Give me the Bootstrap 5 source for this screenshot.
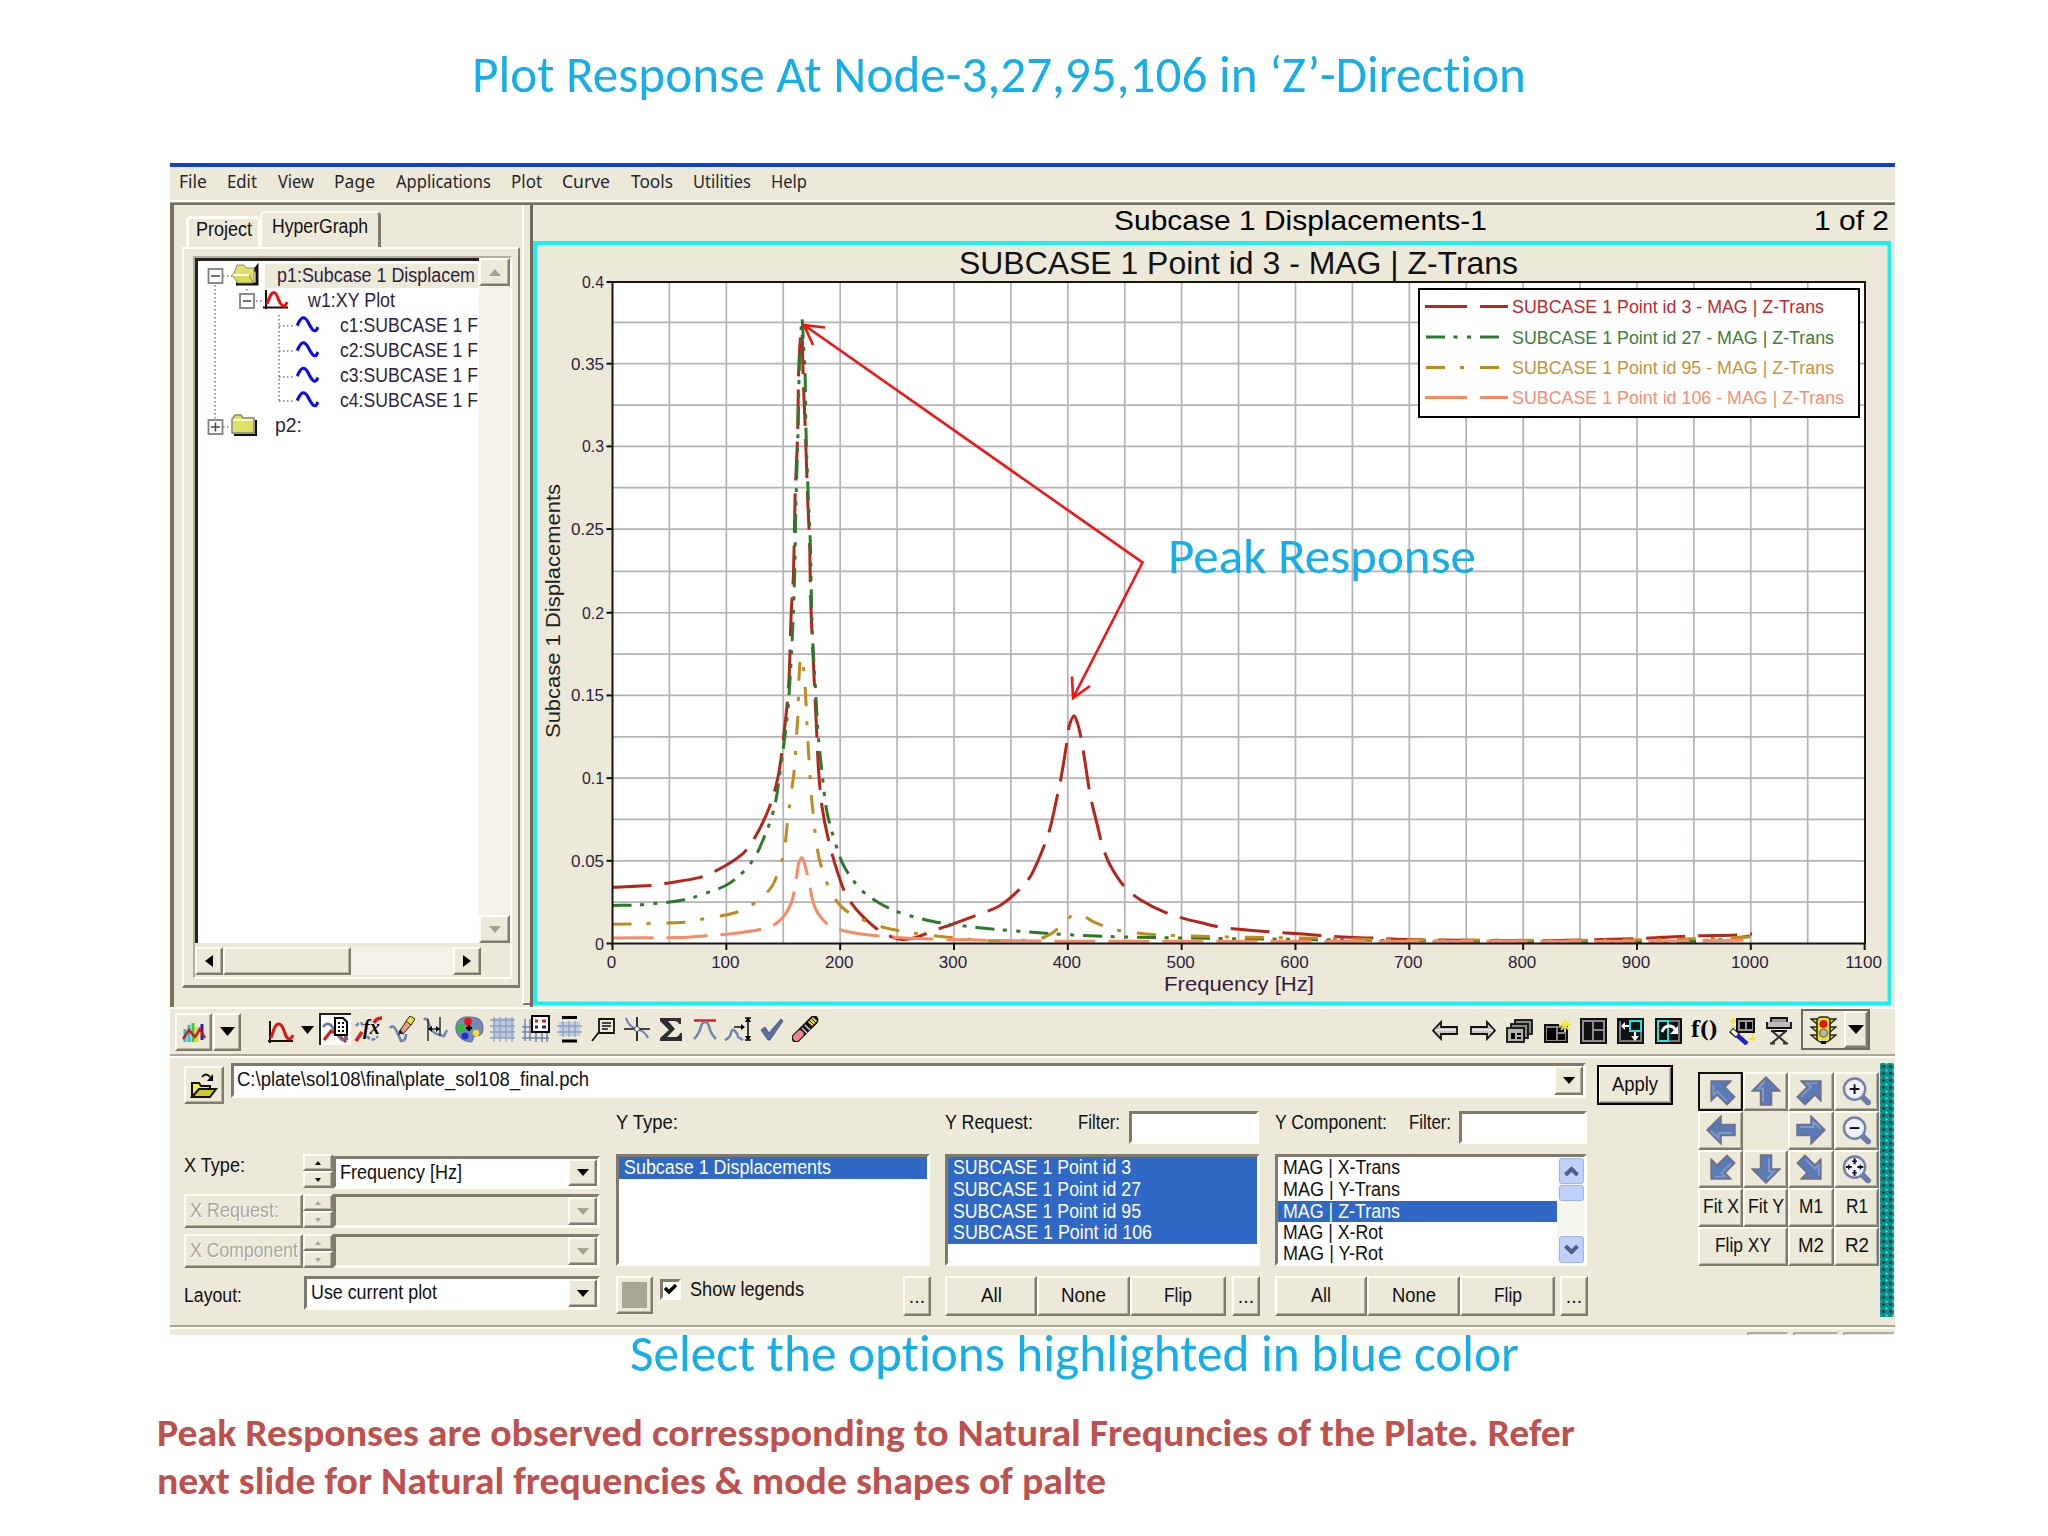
<!DOCTYPE html>
<html lang="en">
<head>
<meta charset="utf-8">
<title>Plot Response</title>
<meta name="viewport" content="width=device-width, initial-scale=1">
<link href="https://cdn.jsdelivr.net/npm/bootstrap@5.3.0/dist/css/bootstrap.min.css" rel="stylesheet">
<style>
:root{--face:#ece9d8;--hi:#fffff6;--lo:#7e7b6d;--lo2:#b3af9f;--sel:#2f68c5;--cy:#14aee9}
body{background:#fff;font-family:"Liberation Sans",Arial,sans-serif;color:#111}
.slide{width:2048px;height:1536px;overflow:hidden;position:relative}
.cal{font-family:Carlito,Lato,sans-serif;color:var(--cy);line-height:1;white-space:nowrap;font-variant-ligatures:none}
.fit{display:inline-block;white-space:nowrap;text-align:left}
.fit>span{display:inline-block;transform-origin:0 50%}
.headline{height:163px;padding:51px 0 0 472px;font-size:50.5px}
.app{margin-left:170px;width:1725px;height:1172px;background:var(--face);font-size:19.5px;line-height:22px}
.topline{height:4px;background:#0f43c4}
.menus{height:33px;padding:0 0 4px 9px;font-family:"Noto Sans","DejaVu Sans",sans-serif;font-size:18px;color:#27262c}
.rule{height:5px;border-top:2px solid #fffff6;background:linear-gradient(#9f9b8b 0 1px,#75735f 1px)}
.work{height:802px}
.side{width:363px;border-left:4px solid #76735f;border-right:3px solid #6d6a5d;position:relative;padding:6px 0 0 8px}
.side::after{content:"";position:absolute;right:0;top:0;bottom:2px;width:8px;border-left:2px solid #fffff6;border-bottom:2px solid var(--lo)}
.tabx{border:3px solid #fffff6;border-bottom:0;border-radius:5px 5px 0 0;background:var(--face);text-align:center}
.tab-a{width:74px;height:31px;margin-left:4px;border-right-width:2px}
.tab-b{width:121px;height:36px;border-right-color:var(--lo);border-width:2px 3px 0 2px;line-height:29px}
.pane{width:338px;height:741px;border:2px solid #fffff6;border-right-color:var(--lo);border-bottom:3px solid var(--lo);padding:7px 0 0 9px}
.tree{width:319px;height:723px;border:2px solid var(--lo2);border-right-color:#fff;border-bottom-color:#fff;position:relative}
.view{width:284px;height:685px;background:#fff;border-top:3px solid #222;border-left:3px solid #222;position:relative;overflow:hidden;color:#2c1f3d}
.view .rowx{height:25.1px;position:relative;white-space:nowrap}
.view svg.wires{position:absolute;left:0;top:0}
.vbar{width:31px;background:#f4f1e7}
.bv{background:var(--face);border:2px solid;border-color:#fffff6 var(--lo) var(--lo) #fffff6;box-shadow:inset -1px -1px 0 #b8b4a3;display:flex;align-items:center;justify-content:center;flex:none}
.sk{background:#fff;border:3px solid;border-color:#7e7b6d #fffff6 #fffff6 #7e7b6d;flex:none}
.sk.off{background:var(--face)}
.main{width:1362px;flex:none}
.cap1{height:36px;font-size:27.5px;line-height:33px;color:#000}
.tools{height:47px;border-top:2px solid #fffff6}
.slot{width:33.6px;flex:none;display:flex;justify-content:center;margin-bottom:5px}
.slot2{width:37.1px;flex:none;display:flex;justify-content:center;margin-bottom:2px}
.sep{height:4px;border-top:2px solid #aaa797;background:#fffff6}
.ctl{height:267px;position:relative}
.gray{color:#aaa798;text-shadow:1px 1px 0 #fff}
.spin{width:30px}
.spin .bv{width:30px;height:17px}
.combo{display:flex;align-items:stretch;justify-content:space-between}
.combo .bv{width:29px}
.combo>span{padding-left:4px;line-height:28px}
.lst{height:112px;overflow:hidden}
.lst div.it{height:21.8px;line-height:22px;padding-left:5px}
.lst .on{background:var(--sel);color:#fff}
.pad{display:grid;grid-template-columns:45px 45px 46px 45px;grid-auto-rows:38.8px;width:181px;height:194px}
.pad .fit{margin-top:-2px}
.teal{width:14px;height:254px;background-color:#0b8f8b;background-image:radial-gradient(circle,#053f3f 1.2px,transparent 1.6px),radial-gradient(circle,#3fd6cf 1px,transparent 1.4px);background-size:7px 7px;background-position:0 0,3px 4px}
.xp{width:25px;background:#bfd0fb;border:1px solid #9db4ea;border-radius:3px;display:flex;align-items:center;justify-content:center}
.stat{height:3px;border:2px solid var(--lo2);border-bottom:0;border-right-color:#fff}
.foot{padding:0 0 0 157px;color:#c0504d;font-weight:700;font-size:38.5px}
svg{display:block;flex:none}
svg text{font-family:"Liberation Sans",Arial,sans-serif}
</style>
<script src="https://cdn.jsdelivr.net/npm/bootstrap@5.3.0/dist/js/bootstrap.bundle.min.js"></script>
</head>
<body>
<svg width="0" height="0" style="position:absolute"><defs>
<symbol id="wave" viewBox="0 0 22 16"><path d="M1 9C3 6 4 1.500 7 1.500S11 5 13 8.500S16 14 18 14S20 12 21 10.500" fill="none" stroke="#0a0af5" stroke-width="3"/></symbol>
<symbol id="dn" viewBox="0 0 12 7"><path d="M0 0H12L6 7Z"/></symbol>
<symbol id="arr" viewBox="0 0 30 30"><path d="M15 1L29 15H20.500V29H9.500V15H1Z" fill="#5b79b4" stroke="#6f7080" stroke-width="1.500"/><path d="M14 5L7 12.500H12V26" fill="none" stroke="#7d98cc" stroke-width="2"/></symbol>
<symbol id="mag" viewBox="0 0 30 30"><path d="M20 20L27 27" stroke="#6b7ba6" stroke-width="6" stroke-linecap="round"/><circle cx="13" cy="13" r="11" fill="#eef1fa" stroke="#7380a8" stroke-width="2.500"/></symbol>
<symbol id="folder" viewBox="0 0 27 22"><path d="M4 21H26V6" fill="none" stroke="#111" stroke-width="2.500"/><path d="M2 19V5L5 1H11L13 4H24V19Z" fill="#dfe065" stroke="#8b8b74" stroke-width="1.500"/><path d="M3 6H23" stroke="#fffde0" stroke-width="1.500"/></symbol>
</defs></svg>
<main class="slide">
  <h1 class="headline cal m-0 fw-normal"><span class="fit" data-w="1054">Plot Response At Node-3,27,95,106 in ‘Z’-Direction</span></h1>

  <section class="app">
    <div class="topline"></div>
    <nav class="menus d-flex align-items-center">
      <span class="fit" data-w="28" style="margin-right:20px">File</span><span class="fit me-4" data-w="30">Edit</span>
      <span class="fit" data-w="36" style="margin:0 20px 0 -3px">View</span><span class="fit" data-w="41" style="margin-right:21px">Page</span>
      <span class="fit" data-w="95" style="margin-right:20px">Applications</span><span class="fit" data-w="31" style="margin-right:20px">Plot</span>
      <span class="fit" data-w="48" style="margin-right:21px">Curve</span><span class="fit" data-w="42" style="margin-right:20px">Tools</span>
      <span class="fit" data-w="58" style="margin-right:20px">Utilities</span><span class="fit" data-w="36">Help</span>
    </nav>
    <div class="rule"></div>
    <div class="work d-flex">
      <aside class="side">
        <div class="d-flex align-items-end">
          <div class="tabx tab-a"><span class="fit" data-w="56">Project</span></div>
          <div class="tabx tab-b"><span class="fit" data-w="96">HyperGraph</span></div>
        </div>
        <div class="pane">
          <div class="tree">
            <div class="d-flex">
              <div class="view">
                <svg class="wires" width="282" height="200" viewBox="198 261 282 200">
                  <rect x="265" y="264" width="213" height="24" fill="#ece9d8"/>
                  <g stroke="#777" stroke-width="1.500" stroke-dasharray="1.500 2.500" fill="none"><path d="M215 285V420M223 276H232M223 427H231M247 289V294M256 301H263M279 315V401M279 326H295M279 351H295M279 377H295M279 401H295"/></g>
                  <g fill="#fff" stroke="#808080" stroke-width="1.800"><rect x="208.500" y="269" width="14" height="14"/><rect x="240" y="294" width="14" height="14"/><rect x="208.500" y="420" width="14" height="14"/></g>
                  <path d="M211 276H220M243 301H251M211 427H220M215.500 422.500V431.500" stroke="#444" stroke-width="1.500"/>
                  <path d="M236 284H257V267L252 273" fill="none" stroke="#111" stroke-width="3"/><path d="M234 273L237 265H244L246 268H254V282H237Z" fill="#dfe065" stroke="#8b8b74"/><path d="M232 275H249L253 283H238Z" fill="#dcdc50" stroke="#8b8b74"/><path d="M233 275H249" stroke="#fff" stroke-width="1.800"/>
                  <path d="M266 290V309M263 307.500H288" stroke="#111" stroke-width="2"/><path d="M267 304C270 296 271 292.500 274 292.500S278 300 280.500 303.500S285 307 287 302" fill="none" stroke="#ee1010" stroke-width="3"/>
                  <use href="#wave" x="296" y="316" width="23" height="17"/><use href="#wave" x="296" y="341" width="23" height="17"/><use href="#wave" x="296" y="366.500" width="23" height="17"/><use href="#wave" x="296" y="391" width="23" height="17"/>
                  <use href="#folder" x="230" y="414" width="27" height="22"/>
                </svg>
                <div class="rowx" style="padding:4px 0 0 79px;height:29px"><span class="fit" data-w="198">p1:Subcase 1 Displacem</span></div>
                <div class="rowx" style="padding-left:110px"><span class="fit" data-w="87">w1:XY Plot</span></div>
                <div class="rowx" style="padding-left:142px"><span class="fit" data-w="138">c1:SUBCASE 1 F</span></div>
                <div class="rowx" style="padding-left:142px"><span class="fit" data-w="138">c2:SUBCASE 1 F</span></div>
                <div class="rowx" style="padding-left:142px"><span class="fit" data-w="138">c3:SUBCASE 1 F</span></div>
                <div class="rowx" style="padding-left:142px"><span class="fit" data-w="138">c4:SUBCASE 1 F</span></div>
                <div class="rowx" style="padding-left:77px"><span class="fit" data-w="27">p2:</span></div>
              </div>
              <div class="vbar d-flex flex-column justify-content-between">
                <div class="bv" style="height:28px"><svg width="12" height="7"><path d="M0 7H12L6 0Z" fill="#a5a293"/></svg></div>
                <div class="bv" style="height:28px"><svg width="12" height="7" fill="#a5a293"><use href="#dn"/></svg></div>
              </div>
            </div>
            <div class="d-flex mt-1" style="height:28px">
              <div class="bv" style="width:28px"><svg width="8" height="12"><path d="M8 0V12L0 6Z"/></svg></div>
              <div class="bv" style="width:128px"></div>
              <div class="flex-fill" style="background:#f4f1e7"></div>
              <div class="bv" style="width:28px"><svg width="8" height="12"><path d="M0 0V12L8 6Z"/></svg></div>
              <div style="width:29px"></div>
            </div>
          </div>
        </div>
      </aside>
      <div class="main">
        <div class="cap1 d-flex"><span class="fit" data-w="373" style="margin-left:581px">Subcase 1 Displacements-1</span><span class="fit" data-w="75" style="margin-left:327px">1 of 2</span></div>
        <svg id="plot" width="1358" height="766" viewBox="533 241 1358 766">
          <rect x="535" y="243" width="1354.500" height="760.500" fill="none" stroke="#1cf0ee" stroke-width="4"/>
          <rect x="612.500" y="282" width="1252.500" height="661.500" fill="#fff"/>
          <g id="grid" stroke="#b4b2b6" stroke-width="1.700"></g>
          <g id="curves" fill="none" stroke-width="3"></g>
          <rect x="612.500" y="282" width="1252.500" height="661.500" fill="none" stroke="#1a1414" stroke-width="2"/>
          <g id="ticks" font-size="17" fill="#2c1f3d"></g>
          <text x="959" y="274" font-size="32" textLength="559" lengthAdjust="spacingAndGlyphs" fill="#111">SUBCASE 1 Point id 3 - MAG | Z-Trans</text>
          <text x="1164" y="991" font-size="21" textLength="150" lengthAdjust="spacingAndGlyphs" fill="#3a1a42">Frequency [Hz]</text>
          <text transform="translate(560 738) rotate(-90)" font-size="20" textLength="254" lengthAdjust="spacingAndGlyphs" fill="#222">Subcase 1 Displacements</text>
          <rect x="1419" y="289" width="440" height="128" fill="#fff" stroke="#000" stroke-width="2"/>
          <g stroke-width="3.200">
            <path d="M1425 306.500H1508" stroke="#c0261a" stroke-dasharray="42 13"/><path d="M1426 337H1500" stroke="#2c7a2a" stroke-dasharray="19 8.500 4 9.500 4 9"/>
            <path d="M1426 367.500H1500" stroke="#c08a1c" stroke-dasharray="19 15 4 16"/><path d="M1425 397.500H1508" stroke="#f98864" stroke-dasharray="42 13"/>
          </g>
          <g font-size="18">
            <text x="1512" y="313" textLength="312" lengthAdjust="spacingAndGlyphs" fill="#c4262e">SUBCASE 1 Point id 3 - MAG | Z-Trans</text>
            <text x="1512" y="343.500" textLength="322" lengthAdjust="spacingAndGlyphs" fill="#3b8038">SUBCASE 1 Point id 27 - MAG | Z-Trans</text>
            <text x="1512" y="373.500" textLength="322" lengthAdjust="spacingAndGlyphs" fill="#c8923a">SUBCASE 1 Point id 95 - MAG | Z-Trans</text>
            <text x="1512" y="404" textLength="332" lengthAdjust="spacingAndGlyphs" fill="#fa8c70">SUBCASE 1 Point id 106 - MAG | Z-Trans</text>
          </g>
          <path d="M825 327.500L804 325L813 345M804 325L1142.500 562.500L1073 698M1072 676.500L1073 698L1090 686" fill="none" stroke="#fb1010" stroke-width="2.600"/>
          <text x="1168" y="572.500" font-size="50" textLength="308" lengthAdjust="spacingAndGlyphs" style="font-family:Carlito,Lato,sans-serif" fill="#14aee9">Peak Response</text>
        </svg>
      </div>
    </div>

    <div class="tools d-flex align-items-center">
      <div class="bv" style="width:37px;height:38px;margin-left:5px"><svg width="24" height="24" viewBox="0 0 24 24"><path d="M3 9V22M7 5V22" stroke="#19c8d8" stroke-width="3"/><path d="M11 3V22" stroke="#37d030" stroke-width="3"/><path d="M15 7V22" stroke="#e8d520" stroke-width="3"/><path d="M20 4V20" stroke="#2620c0" stroke-width="3"/><path d="M1 19L7 10L13 17L18 9L23 18" fill="none" stroke="#d81515" stroke-width="2.500"/></svg></div>
      <div class="bv" style="width:28px;height:38px;margin-left:1px"><svg width="15" height="9"><path d="M0 0H15L7.500 9Z"/></svg></div>
      <svg width="28" height="24" viewBox="0 0 28 24" style="margin-left:26px"><path d="M3 1V23M1 21H26" stroke="#111" stroke-width="2"/><path d="M4 18C7 9 8 4 12 4S17 12 19 16S24 20 26 15" fill="none" stroke="#e31212" stroke-width="3"/></svg>
      <svg width="13" height="8" style="margin:0 4px 3px 6px"><path d="M0 0H13L6.500 8Z"/></svg>
      <div class="slot"><svg width="32" height="32" viewBox="0 0 32 32"><rect width="32" height="32" fill="#fbfaf4"/><path d="M1 32V1H32" fill="none" stroke="#222" stroke-width="2"/><path d="M5 27L12 18L18 21L27 29M25 20L28 27" stroke="#dc1a1a" stroke-width="3" fill="none"/><path d="M4 14Q9 7 14 15T22 26Q25 29 28 22" fill="none" stroke="#647aa8" stroke-width="2.500"/><path d="M16 5H24L28 9V22H16Z" fill="#fff" stroke="#000" stroke-width="2"/><path d="M19 10H21M23 10H25M19 14H21M23 14H25M19 18H21M23 18H25" stroke="#000" stroke-width="2"/></svg></div>
      <div class="slot"><svg width="29" height="28" viewBox="0 0 29 28"><path d="M2 26L8 17M20 8Q22 3 28 3" stroke="#e01818" stroke-width="3.500" fill="none"/><path d="M2 11Q6 5 10 11M13 21Q18 28 24 21" fill="none" stroke="#7285ad" stroke-width="2.500" stroke-dasharray="4 1.500"/><text x="9" y="19" font-size="20" font-weight="700" font-style="italic" style="font-family:'Liberation Serif'">fx</text></svg></div>
      <div class="slot"><svg width="27" height="27" viewBox="0 0 27 27"><path d="M2 12Q5 8 8 14T13 25Q18 25 18 18" fill="none" stroke="#6f83ad" stroke-width="2.700"/><path d="M11 16L19 4L24 8L15 18Z" fill="#e8a080" stroke="#222"/><path d="M18 5L22 0L27 3L23 9Z" fill="#ece52b" stroke="#222"/><path d="M10 19L12 13L15 17Z" fill="#222"/></svg></div>
      <div class="slot"><svg width="25" height="26" viewBox="0 0 25 26"><path d="M1 4Q4 0 6 8T14 18T21 20L24 14" fill="none" stroke="#7285ad" stroke-width="2.500"/><path d="M5 3V25M17 1V20M5 13H17" stroke="#333" stroke-width="1.500"/><path d="M5 13L9 10V16ZM17 13L13 10V16Z"/></svg></div>
      <div class="slot"><svg width="29" height="27" viewBox="0 0 29 27"><path d="M14 1C4 0 0 7 1 14S9 26 16 26C19 26 17 21 20 20S28 21 28 12S22 1 14 1Z" fill="#7489b6" stroke="#5a6c96"/><circle cx="13" cy="5.500" r="3.800" fill="#e11"/><circle cx="6" cy="12" r="3.800" fill="#1fc81f"/><circle cx="10" cy="20" r="3.500" fill="#1a32d8"/><circle cx="21" cy="17" r="3.200" fill="#f0e42a"/><path d="M11 12H17M14 9V15" stroke="#000" stroke-width="2.500"/></svg></div>
      <div class="slot"><svg width="27" height="27" viewBox="0 0 27 27"><rect x="4" y="2" width="21" height="20" fill="#b9c6de"/><path d="M5 1V26M11 1V26M17 1V26M23 1V26M1 4H26M1 10H26M1 16H26M1 22H26" stroke="#8fa1c2" stroke-width="1.300"/></svg></div>
      <div class="slot"><svg width="28" height="28" viewBox="0 0 28 28"><path d="M3 4V26M8 4V26M14 10V27M20 10V27M25 10V27M0 12H27M0 17H27M0 23H27" stroke="#6f84ac" stroke-width="1.500"/><rect x="10" y="1" width="17" height="16" fill="#fff" stroke="#000" stroke-width="2"/><path d="M13 6H16M20 6H24" stroke="#e11" stroke-width="3"/><path d="M13 12H16M20 12H24" stroke="#22b" stroke-width="3"/></svg></div>
      <div class="slot"><svg width="25" height="27" viewBox="0 0 25 27"><path d="M5 1.500H20M5 25H20" stroke="#000" stroke-width="3"/><rect x="2" y="6" width="21" height="14" fill="#c3cde0"/><path d="M0 10H25M0 16H25M6 5V21M12 5V21M18 5V21" stroke="#8fa1c2" stroke-width="1.300"/></svg></div>
      <div class="slot"><svg width="25" height="25" viewBox="0 0 25 25"><path d="M1 24L8 15V2H23V16H8" fill="none" stroke="#111" stroke-width="1.800"/><path d="M11 6H20M11 9H20M11 12H17" stroke="#111" stroke-width="1.700"/></svg></div>
      <div class="slot"><svg width="28" height="26" viewBox="0 0 28 26"><path d="M3 2Q6 11 14 13T25 22" fill="none" stroke="#7285ad" stroke-width="2.200"/><path d="M14 1V25M1 13H27" stroke="#111" stroke-width="1.700"/><circle cx="14" cy="13" r="2.500" fill="#dff" stroke="#456"/></svg></div>
      <div class="slot"><svg width="24" height="25" viewBox="0 0 24 25"><path d="M1 1H22V7H20Q19 4 15 4H9L16 12L8 20H16Q20 20 21 16H23V24H1V21L10 13L1 4Z" fill="#2e2e33"/></svg></div>
      <div class="slot"><svg width="25" height="23" viewBox="0 0 25 23"><path d="M2 2.500H24" stroke="#e02020" stroke-width="2.500"/><path d="M2 21Q7 16 8.500 10T13 4T17.500 10T24 21" fill="none" stroke="#6f83ad" stroke-width="2.500"/></svg></div>
      <div class="slot"><svg width="28" height="27" viewBox="0 0 28 27"><path d="M1 24Q6 22 7 17T11 15T14 21L19 24" fill="none" stroke="#7285ad" stroke-width="2.500"/><path d="M24 2V24M21 2H27M21 24H27M10 11H20" stroke="#111" stroke-width="1.600"/><path d="M24 1L21 6H27ZM24 25L21 20H27ZM21 11L17 8V14Z"/></svg></div>
      <div class="slot"><svg width="24" height="23" viewBox="0 0 24 23"><path d="M1 12L5 9L9 15L21 1L23 3L10 22H8Z" fill="#5b6f9c" stroke="#4b5c85"/></svg></div>
      <div class="slot"><svg width="27" height="26" viewBox="0 0 27 26"><path d="M4 22L22 4" stroke="#111" stroke-width="9" stroke-linecap="round"/><path d="M4.500 21.500L8 18" stroke="#f0868e" stroke-width="7" stroke-linecap="round"/><path d="M18 8L23 3" stroke="#ecdf2a" stroke-width="6"/><path d="M17 4L23 10M19 2L25 8" stroke="#111" stroke-width="1"/><path d="M10 12L15 17M13 9L18 14" stroke="#ccc" stroke-width="1.500"/></svg></div>

      <div class="d-flex align-items-center" style="margin-left:605px">
        <div class="slot2"><svg width="26" height="21" viewBox="0 0 26 21"><path d="M1 10.500L9 2V7H25V14H9V19Z" fill="#c9c6c2" stroke="#111" stroke-width="1.800"/><path d="M3 10H24" stroke="#fff"/></svg></div>
        <div class="slot2"><svg width="26" height="21" viewBox="0 0 26 21"><path d="M25 10.500L17 2V7H1V14H17V19Z" fill="#c9c6c2" stroke="#111" stroke-width="1.800"/><path d="M2 10H23" stroke="#fff"/></svg></div>
        <div class="slot2"><svg width="27" height="24" viewBox="0 0 27 24"><g fill="#8b8a88" stroke="#111" stroke-width="1.800"><rect x="9" y="1" width="17" height="14"/><rect x="5" y="5" width="17" height="14"/><rect x="1" y="9" width="17" height="14" fill="#b4b2ae"/></g><path d="M5 14H9V20H5ZM11 14H15V16H11ZM11 18H15V20H11Z"/></svg></div>
        <div class="slot2"><svg width="28" height="26" viewBox="0 0 28 26"><rect x="2" y="7" width="22" height="17" fill="#888" stroke="#111" stroke-width="2"/><path d="M4 10H13V22H4ZM15 10H22V14H15ZM15 16H22V22H15Z"/><path d="M22 1V14M16 7H28M18 3L26 12M26 3L18 12" stroke="#efe83a" stroke-width="1.800"/></svg></div>
        <div class="slot2"><svg width="27" height="26" viewBox="0 0 27 26"><rect width="27" height="26" fill="#111"/><path d="M3 3H24V23H3ZM13 3V23M13 12H24" fill="none" stroke="#8d8a90" stroke-width="2"/></svg></div>
        <div class="slot2"><svg width="27" height="26" viewBox="0 0 27 26"><rect width="27" height="26" fill="#111"/><path d="M3 3V23H24V13" fill="none" stroke="#777" stroke-width="2"/><path d="M13 3H24V13H13Z" fill="none" stroke="#20e5e5" stroke-width="2"/><path d="M5 8H12M18 14V21" stroke="#fff" stroke-width="2"/><path d="M4 8L8 4V12ZM18 23L14 18H22Z" fill="#fff"/></svg></div>
        <div class="slot2"><svg width="27" height="26" viewBox="0 0 27 26"><rect width="27" height="26" fill="#111"/><path d="M13 3H24V23H13" fill="none" stroke="#777" stroke-width="2"/><path d="M3 3H13V23H3Z" fill="none" stroke="#20e5e5" stroke-width="2"/><path d="M7 14Q9 8 14 8T20 12" fill="none" stroke="#fff" stroke-width="3"/><path d="M23 8V16H15Z" fill="#fff"/></svg></div>
        <div class="slot2"><svg width="28" height="26" viewBox="0 0 28 26"><text x="0" y="19" font-size="22" font-weight="700" textLength="27" lengthAdjust="spacingAndGlyphs" style="font-family:'DejaVu Serif'">f()</text></svg></div>
        <div class="slot2"><svg width="27" height="28" viewBox="0 0 27 28"><path d="M4 1V7M1 4H7M14 18V24M24 16V24M20 22H26M2 10H8" stroke="#efe83a" stroke-width="2"/><rect x="8" y="2" width="17" height="13" fill="#999" stroke="#111" stroke-width="2"/><path d="M11 5H16V12H11ZM18 5H23V12H18Z"/><path d="M2 13L9 19" stroke="#222" stroke-width="6"/><path d="M3 13.500L9 19" stroke="#fff" stroke-width="3.500"/><path d="M8 18L18 27" stroke="#1f22c0" stroke-width="4.500"/></svg></div>
        <div class="slot2"><svg width="26" height="28" viewBox="0 0 26 28"><path d="M5 1H21V8H5Z" fill="#999" stroke="#111" stroke-width="1.800"/><path d="M1 5V11H25V5" fill="#bbb" stroke="#111" stroke-width="1.800"/><path d="M5 14H21" stroke="#111" stroke-width="2"/><path d="M6 14L20 26M20 14L6 26M4 26.500H9M17 26.500H22" stroke="#333" stroke-width="2.200"/></svg></div>
      </div>
      <div class="d-flex" style="width:69px;height:41px;border:2px solid #6d6a5d;margin:0 0 4px 3px">
        <div class="d-flex justify-content-center align-items-center" style="width:41px"><svg width="27" height="28" viewBox="0 0 27 28"><path d="M1 3H26L20 8H7ZM1 11H26L20 16H7ZM1 19H26L20 24H7Z" fill="#e8df28" stroke="#222" stroke-width="1.300"/><rect x="7" y="1" width="13" height="25" rx="4" fill="#e8df28" stroke="#222" stroke-width="1.500"/><circle cx="13.500" cy="8" r="4" fill="#e21616"/><circle cx="13.500" cy="17" r="4" fill="#b7b7ac" stroke="#555"/><path d="M11 25H16V28H11Z"/></svg></div>
        <div class="bv flex-fill"><svg width="16" height="9"><path d="M0 0H16L8 9Z"/></svg></div>
      </div>
    </div>
    <div class="sep"></div>

    <div class="ctl d-flex">
      <div style="width:1503px;padding:5px 0 0 14px">
        <div class="d-flex" style="height:49px">
          <div class="bv" style="width:40px;height:38px;margin-top:3px"><svg width="28" height="27" viewBox="0 0 28 27"><path d="M12 5Q16 0 20 5" fill="none" stroke="#111" stroke-width="2"/><path d="M23 2V9H17Z"/><path d="M2 25V11H9L11 14H20V18" fill="#f2ec4a" stroke="#111" stroke-width="2"/><path d="M2 25L9 17H26L20 25Z" fill="#cfca28" stroke="#111" stroke-width="2"/></svg></div>
          <div class="sk combo" style="width:1355px;height:35px;margin-left:7px"><span><span class="fit" data-w="352" style="margin-left:-1px">C:\plate\sol108\final\plate_sol108_final.pch</span></span><div class="bv"><svg width="12" height="7"><use href="#dn"/></svg></div></div>
          <div class="bv" style="width:74px;height:38px;margin:3px 0 0 12px;outline:2px solid #000;outline-offset:-1px"><span class="fit" data-w="46">Apply</span></div>
        </div>
        <div class="d-flex">
          <div style="width:432px;padding-top:44px">
            <div class="d-flex" style="height:38px"><span style="width:119px;margin-top:-1px"><span class="fit" data-w="61">X Type:</span></span>
              <div class="spin" style="margin-top:-2px"><div class="bv"><svg width="6" height="4"><path d="M0 4H6L3 0Z"/></svg></div><div class="bv"><svg width="6" height="4"><path d="M0 0H6L3 4Z"/></svg></div></div>
              <div class="sk combo" style="width:267px;height:33px"><span><span class="fit" data-w="122">Frequency [Hz]</span></span><div class="bv"><svg width="12" height="7"><use href="#dn"/></svg></div></div></div>
            <div class="d-flex" style="height:40px"><div class="bv gray justify-content-start ps-1" style="width:119px;height:34px"><span class="fit" data-w="89">X Request:</span></div>
              <div class="spin"><div class="bv"><svg width="6" height="4"><path d="M0 4H6L3 0Z" fill="#a5a293"/></svg></div><div class="bv"><svg width="6" height="4"><path d="M0 0H6L3 4Z" fill="#a5a293"/></svg></div></div>
              <div class="sk off combo" style="width:267px;height:34px"><span></span><div class="bv"><svg width="12" height="7" fill="#a5a293"><use href="#dn"/></svg></div></div></div>
            <div class="d-flex" style="height:42px"><div class="bv gray justify-content-start ps-1" style="width:119px;height:34px"><span class="fit" data-w="108">X Component</span></div>
              <div class="spin"><div class="bv"><svg width="6" height="4"><path d="M0 4H6L3 0Z" fill="#a5a293"/></svg></div><div class="bv"><svg width="6" height="4"><path d="M0 0H6L3 4Z" fill="#a5a293"/></svg></div></div>
              <div class="sk off combo" style="width:267px;height:34px"><span></span><div class="bv"><svg width="12" height="7" fill="#a5a293"><use href="#dn"/></svg></div></div></div>
            <div class="d-flex"><span style="width:120px;padding-top:9px"><span class="fit" data-w="58">Layout:</span></span>
              <div class="sk combo" style="width:296px;height:34px"><span><span class="fit" data-w="126">Use current plot</span></span><div class="bv"><svg width="12" height="7"><use href="#dn"/></svg></div></div></div>
          </div>
          <div style="width:329px">
            <div style="height:42px"><span class="fit" data-w="62">Y Type:</span></div>
            <div class="sk lst" style="width:314px"><div class="it on"><span class="fit" data-w="207">Subcase 1 Displacements</span></div></div>
            <div class="d-flex" style="margin-top:10px;width:315px">
              <div class="bv" style="width:37px;height:38px"><div style="width:25px;height:26px;background:#a9a696"></div></div>
              <div class="sk" style="width:21px;height:21px;margin:3px 9px 0 7px"><svg width="15" height="15" viewBox="0 0 15 15"><path d="M2 6L6 10L13 3" fill="none" stroke="#000" stroke-width="3.500"/></svg></div>
              <span class="fit" data-w="114" style="margin-top:3px">Show legends</span>
              <div class="bv ms-auto" style="width:28px;height:40px">...</div>
            </div>
          </div>
          <div style="width:330px">
            <div class="d-flex" style="height:42px"><span class="fit" data-w="88" style="margin-right:45px">Y Request:</span><span class="fit" data-w="42">Filter:</span><div class="sk" style="width:130px;height:33px;margin:-1px 0 0 9px"></div></div>
            <div class="sk lst" style="width:315px"><div class="it on"><span class="fit" data-w="178">SUBCASE 1 Point id 3</span></div><div class="it on"><span class="fit" data-w="188">SUBCASE 1 Point id 27</span></div><div class="it on"><span class="fit" data-w="188">SUBCASE 1 Point id 95</span></div><div class="it on"><span class="fit" data-w="199">SUBCASE 1 Point id 106</span></div></div>
            <div class="d-flex" style="margin-top:10px;width:315px">
              <div class="bv" style="width:92px;height:40px"><span class="fit" data-w="21">All</span></div><div class="bv" style="width:93px;height:40px"><span class="fit" data-w="45">None</span></div><div class="bv" style="width:96px;height:40px"><span class="fit" data-w="28">Flip</span></div>
              <div class="bv ms-auto" style="width:28px;height:40px">...</div>
            </div>
          </div>
          <div style="width:330px">
            <div class="d-flex" style="height:42px"><span class="fit" data-w="112" style="margin-right:22px">Y Component:</span><span class="fit" data-w="42">Filter:</span><div class="sk" style="width:128px;height:33px;margin:-1px 0 0 8px"></div></div>
            <div class="sk lst d-flex" style="width:312px">
              <div style="width:279px"><div class="it"><span class="fit" data-w="117">MAG | X-Trans</span></div><div class="it"><span class="fit" data-w="117">MAG | Y-Trans</span></div><div class="it on"><span class="fit" data-w="117">MAG | Z-Trans</span></div><div class="it"><span class="fit" data-w="100">MAG | X-Rot</span></div><div class="it" style="height:18px;line-height:20px"><span class="fit" data-w="100">MAG | Y-Rot</span></div></div>
              <div class="d-flex flex-column" style="background:#f6f5ee;height:106px;padding:1px 0 0 2px">
                <div class="xp" style="height:26px"><svg width="15" height="10"><path d="M1.500 9L7.500 3L13.500 9" fill="none" stroke="#4d6185" stroke-width="4"/></svg></div>
                <div class="xp" style="height:16px;margin-top:1px"></div>
                <div class="xp mt-auto" style="height:27px"><svg width="15" height="10"><path d="M1.500 1L7.500 7L13.500 1" fill="none" stroke="#4d6185" stroke-width="4"/></svg></div>
              </div>
            </div>
            <div class="d-flex" style="margin-top:10px;width:313px">
              <div class="bv" style="width:92px;height:40px"><span class="fit" data-w="20">All</span></div><div class="bv" style="width:93px;height:40px"><span class="fit" data-w="44">None</span></div><div class="bv" style="width:95px;height:40px"><span class="fit" data-w="28">Flip</span></div>
              <div class="bv ms-auto" style="width:28px;height:40px">...</div>
            </div>
          </div>
        </div>
      </div>
      <div class="d-flex" style="padding:5px 0 0 25px">
        <div class="pad" style="margin-top:9px">
          <div class="bv" style="outline:2px solid #111;outline-offset:-2px"><svg width="30" height="30"><use href="#arr" transform="rotate(-45 15 15)" width="30" height="30"/></svg></div>
          <div class="bv"><svg width="30" height="30"><use href="#arr" width="30" height="30"/></svg></div>
          <div class="bv"><svg width="30" height="30"><use href="#arr" transform="rotate(45 15 15)" width="30" height="30"/></svg></div>
          <div class="bv"><svg width="29" height="30" viewBox="0 0 30 30"><use href="#mag"/><path d="M8 13H18M13 8V18" stroke="#111" stroke-width="2"/></svg></div>
          <div class="bv"><svg width="30" height="30"><use href="#arr" transform="rotate(-90 15 15)" width="30" height="30"/></svg></div>
          <div></div>
          <div class="bv"><svg width="30" height="30"><use href="#arr" transform="rotate(90 15 15)" width="30" height="30"/></svg></div>
          <div class="bv"><svg width="29" height="30" viewBox="0 0 30 30"><use href="#mag"/><path d="M8 13H18" stroke="#111" stroke-width="2"/></svg></div>
          <div class="bv"><svg width="30" height="30"><use href="#arr" transform="rotate(-135 15 15)" width="30" height="30"/></svg></div>
          <div class="bv"><svg width="30" height="30"><use href="#arr" transform="rotate(180 15 15)" width="30" height="30"/></svg></div>
          <div class="bv"><svg width="30" height="30"><use href="#arr" transform="rotate(135 15 15)" width="30" height="30"/></svg></div>
          <div class="bv"><svg width="29" height="30" viewBox="0 0 30 30"><use href="#mag"/><path d="M13 4V10M13 16V22M4 13H10M16 13H22" stroke="#111" stroke-width="2"/><path d="M10.500 7H15.500M10.500 19H15.500M7 10.500V15.500M19 10.500V15.500" stroke="#111" stroke-width="1.500"/></svg></div>
          <div class="bv"><span class="fit" data-w="36">Fit X</span></div><div class="bv"><span class="fit" data-w="36">Fit Y</span></div><div class="bv"><span class="fit" data-w="24">M1</span></div><div class="bv"><span class="fit" data-w="22">R1</span></div>
          <div class="bv" style="grid-column:span 2"><span class="fit" data-w="56">Flip XY</span></div><div class="bv"><span class="fit" data-w="26">M2</span></div><div class="bv"><span class="fit" data-w="24">R2</span></div>
        </div>
        <div class="teal" style="margin-left:1px"></div>
      </div>
    </div>
    <div class="sep"></div>
    <div class="d-flex justify-content-end align-items-end" style="height:6px;gap:4px"><div class="stat" style="width:42px"></div><div class="stat" style="width:46px"></div><div class="stat" style="width:52px"></div></div>
  </section>

  <p class="cal position-relative" style="margin:-5px 0 0;padding-left:630px;font-size:50.5px;height:85px"><span class="fit" data-w="889">Select the options highlighted in blue color</span></p>
  <div class="cal foot">
    <div style="height:47.500px"><span class="fit" data-w="1418">Peak Responses are observed corressponding to Natural Frequncies of the Plate. Refer</span></div>
    <div><span class="fit" data-w="949">next slide for Natural frequencies &amp; mode shapes of palte</span></div>
  </div>
</main>
<script>
// Condense or widen each label to its stated width
document.querySelectorAll('.fit').forEach(e=>{
  const s=document.createElement('span');s.textContent=e.textContent;e.textContent='';e.appendChild(s);
  const w=+e.dataset.w;s.style.transform='translateY(-1px) scaleX('+w/s.getBoundingClientRect().width+')';
  s.style.marginRight='-999px';e.style.width=w+'px';
});
const X=h=>612.5+h*1.1383,Y=v=>943.5-v*1653.75,NS='http://www.w3.org/2000/svg';
const add=(p,t,a,txt)=>{const n=document.createElementNS(NS,t);for(const k in a)n.setAttribute(k,a[k]);if(txt!==undefined)n.textContent=txt;p.appendChild(n)};
const g=document.getElementById('grid'),t=document.getElementById('ticks'),c=document.getElementById('curves');
for(let h=50;h<1100;h+=50)add(g,'path',{d:`M${X(h)} 282V943.5`});
for(let i=1;i<16;i++)add(g,'path',{d:`M612.5 ${Y(i*.025)-(i>9?1:0)}H1865`});
for(let h=0;h<=1100;h+=100){add(t,'path',{d:`M${X(h)} 943V950`,stroke:'#111','stroke-width':2});add(t,'text',{x:X(h)-1,y:967.5,'text-anchor':'middle'},h)}
for(let i=0;i<=8;i++){const v=i*.05,y=Y(v)-(i>4&&i<8?1:0);add(t,'path',{d:`M606.5 ${y}H613`,stroke:'#111','stroke-width':2});add(t,'text',{x:604,y:y+6,'text-anchor':'end',textLength:[9,33,22,33,22,33,22,33,22][i],lengthAdjust:'spacingAndGlyphs'},+v.toFixed(2))}
const series=[
['#b8231a','39 13',[0,.034,34,.035,46,.0363,77,.04,88,.043,113,.0534,122,.0607,137,.081,145.5,.101,151,.129,155,.159,157,.2,159,.224,160.4,.27,162.7,.31,163.5,.345,165,.365,166.3,.371,167.5,.343,169.4,.31,171.4,.27,173.3,.238,174,.21,176.5,.1695,179,.133,181,.105,184,.083,189.4,.0637,198,.0425,206,.0284,220,.0163,241,.0052,255,.0024,263,.003,284,.0083,298,.0115,320,.0171,339,.0224,358,.033,367,.0405,379,.0587,384,.0687,391,.09,394,.1,399,.121,401,.131,405.5,.1377,408.6,.133,412.5,.121,415.7,.107,419.6,.09,425.5,.0728,430.6,.0587,437,.0476,451,.0335,463,.0268,486,.0187,500,.0155,516,.0127,537.5,.0095,573,.0073,610,.0056,634,.0042,665,.0034,696,.0024,800,.0016,869,.0024,908,.0032,953,.0046,987,.0052,1001,.0058]],
['#2a7a28','19 8.5 4 9.5 4 9',[0,.023,20,.0232,33,.024,45,.0246,63,.0264,80,.03,99,.0349,116,.0441,127,.0546,132,.0623,137,.0708,143,.0849,149,.113,154,.141,158,.186,160,.224,161.3,.27,163,.31,164,.345,165,.36,166.4,.378,168,.36,169.2,.345,170,.31,172,.27,174,.238,174.7,.21,175.7,.186,178.4,.153,180.4,.129,183.5,.107,188,.081,194,.0647,202,.0486,208,.0415,220,.0314,237,.0234,251,.019,267,.0157,288,.0125,320,.0097,355,.0075,398,.0054,437,.0042,496,.0034,600,.0025,750,.0014,900,.001,950,.0014,975,.0024,1000,.0046]],
['#c08a1c','19 15 4 16',[0,.0117,30,.012,65,.0129,78,.0147,106,.0183,119,.022,139,.0335,146,.044,151,.0566,154,.0754,157,.0909,160,.107,161.6,.125,163,.14,163.5,.155,165,.1715,166.3,.173,168,.165,169.4,.153,171,.131,173,.107,175,.0869,177,.0748,179,.0607,183,.0476,189,.0355,195,.0274,205,.02,220,.0143,241,.0093,269,.0058,304,.0032,335,.0016,371,.0022,386,.0062,396,.0123,408,.0183,423,.0129,445,.0079,476,.0054,523,.0042,600,.0034,700,.0022,850,.002,950,.0028,1000,.004]],
['#fa8a64','41 13',[0,.0034,60,.0036,80,.0046,100,.0056,125,.0079,139,.0103,149,.0153,157,.0244,161,.0365,163.5,.0486,166.3,.052,169,.0476,172.5,.0375,176.5,.0244,181,.0177,190,.0113,202,.0079,220,.0056,261,.0032,312,.0022,400,.0014,900,.0014,1000,.002]]];
// Monotone cubic through the sampled points
for(const [col,dash,d] of series){
  const P=[];for(let i=0;i<d.length;i+=2)P.push([X(d[i]),Y(d[i+1])]);
  const n=P.length,s=[],m=[];
  for(let i=0;i<n-1;i++)s.push((P[i+1][1]-P[i][1])/(P[i+1][0]-P[i][0]));
  m[0]=s[0];m[n-1]=s[n-2];
  for(let i=1;i<n-1;i++)m[i]=s[i-1]*s[i]<=0?0:2*s[i-1]*s[i]/(s[i-1]+s[i]);
  let p='M'+P[0].join(' ');
  for(let i=0;i<n-1;i++){const k=(P[i+1][0]-P[i][0])/3;p+=`C${(P[i][0]+k).toFixed(2)} ${(P[i][1]+k*m[i]).toFixed(2)} ${(P[i+1][0]-k).toFixed(2)} ${(P[i+1][1]-k*m[i+1]).toFixed(2)} ${P[i+1][0].toFixed(2)} ${P[i+1][1].toFixed(2)}`}
  add(c,'path',{d:p,stroke:col,'stroke-dasharray':dash,'stroke-linejoin':'round'});
}
</script>
</body>
</html>
